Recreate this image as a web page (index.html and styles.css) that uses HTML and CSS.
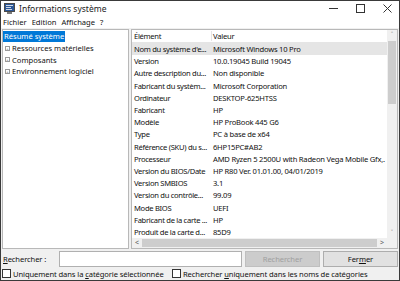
FILE: index.html
```html
<!DOCTYPE html>
<html lang="fr">
<head>
<meta charset="utf-8">
<title>Informations système</title>
<link rel="stylesheet" href="styles.css">
</head>
<body>
<div class="window">
  <div class="titlebar">
    <svg class="appicon" width="11" height="11" viewBox="0 0 11 11">
      <rect x="0.5" y="0.5" width="10" height="8" fill="#2b5797" stroke="#4a4a4a"/>
      <rect x="2" y="2" width="7" height="1" fill="#cfd8e6"/>
      <rect x="2" y="4" width="5" height="1" fill="#cfd8e6"/>
      <rect x="2" y="6" width="6" height="1" fill="#cfd8e6"/>
      <rect x="3" y="9" width="5" height="2" fill="#7a7a7a"/>
    </svg>
    <span class="title">Informations système</span>
    <div class="controls">
      <svg width="9" height="9" viewBox="0 0 9 9"><path d="M0 4.5H9" stroke="#333" stroke-width="1"/></svg>
      <svg width="9" height="9" viewBox="0 0 9 9"><rect x="0.5" y="0.5" width="8" height="8" fill="none" stroke="#333"/></svg>
      <svg width="9" height="9" viewBox="0 0 9 9"><path d="M0.5 0.5L8.5 8.5M8.5 0.5L0.5 8.5" stroke="#333" stroke-width="1"/></svg>
    </div>
  </div>
  <div class="menubar">
    <span>Fichier</span><span>Edition</span><span>Affichage</span><span>?</span>
  </div>
  <div class="main">
    <div class="tree">
      <div class="node"><span class="sel">Résumé système</span></div>
      <div class="node"><span class="exp">+</span><span>Ressources matérielles</span></div>
      <div class="node"><span class="exp">+</span><span>Composants</span></div>
      <div class="node"><span class="exp">+</span><span>Environnement logiciel</span></div>
    </div>
    <div class="list">
      <div class="table">
        <div class="row head"><div class="c1">Élément</div><div class="c2">Valeur</div></div>
        <div class="row hl"><div class="c1">Nom du système d'e...</div><div class="c2">Microsoft Windows 10 Pro</div></div>
        <div class="row"><div class="c1">Version</div><div class="c2">10.0.19045 Build 19045</div></div>
        <div class="row"><div class="c1">Autre description du...</div><div class="c2">Non disponible</div></div>
        <div class="row"><div class="c1">Fabricant du systèm...</div><div class="c2">Microsoft Corporation</div></div>
        <div class="row"><div class="c1">Ordinateur</div><div class="c2">DESKTOP-625HTSS</div></div>
        <div class="row"><div class="c1">Fabricant</div><div class="c2">HP</div></div>
        <div class="row"><div class="c1">Modèle</div><div class="c2">HP ProBook 445 G6</div></div>
        <div class="row"><div class="c1">Type</div><div class="c2">PC à base de x64</div></div>
        <div class="row"><div class="c1">Référence (SKU) du s...</div><div class="c2">6HP15PC#AB2</div></div>
        <div class="row"><div class="c1">Processeur</div><div class="c2">AMD Ryzen 5 2500U with Radeon Vega Mobile Gfx,.</div></div>
        <div class="row"><div class="c1">Version du BIOS/Date</div><div class="c2">HP R80 Ver. 01.01.00, 04/01/2019</div></div>
        <div class="row"><div class="c1">Version SMBIOS</div><div class="c2">3.1</div></div>
        <div class="row"><div class="c1">Version du contrôle...</div><div class="c2">99.09</div></div>
        <div class="row"><div class="c1">Mode BIOS</div><div class="c2">UEFI</div></div>
        <div class="row"><div class="c1">Fabricant de la carte ...</div><div class="c2">HP</div></div>
        <div class="row"><div class="c1">Produit de la carte d...</div><div class="c2">85D9</div></div>
      </div>
      <div class="vscroll">
        <span class="arrow">&#x2c4;</span>
        <div class="vtrack"><div class="vthumb"></div></div>
        <span class="arrow">&#x2c5;</span>
      </div>
      <div class="hscroll">
        <span class="arrow">&lt;</span>
        <div class="hthumb"></div>
        <span class="arrow">&gt;</span>
      </div>
      <div class="corner"></div>
    </div>
  </div>
  <div class="search">
    <label class="slabel"><u>R</u>echercher :</label>
    <div class="input"></div>
    <div class="btn disabled">Rechercher</div>
    <div class="btn"><span>Fer<u>m</u>er</span></div>
  </div>
  <div class="checks">
    <label class="chk"><span class="box"></span><span>Uniquement dans la <u>c</u>atégorie sélectionnée</span></label>
    <label class="chk second"><span class="box"></span><span>Rechercher <u>u</u>niquement dans les noms de catégories</span></label>
  </div>
</div>
</body>
</html>
```

FILE: styles.css
```css
* { box-sizing: border-box; }
html, body { margin: 0; padding: 0; }
body {
  width: 400px;
  height: 281px;
  overflow: hidden;
  font-family: "Noto Sans", "Liberation Sans", sans-serif;
  font-size: 7.6px;
  letter-spacing: -0.1px;
  color: #111;
  background: #fff;
}
.window {
  width: 400px;
  height: 281px;
  border: 1px solid #3a3a3a;
  background: #f0f0f0;
  display: flex;
  flex-direction: column;
}
.titlebar {
  height: 15px;
  background: #fff;
  display: flex;
  align-items: center;
  padding-left: 3px;
}
.appicon { flex: none; }
.title {
  margin-left: 4px;
  font-size: 8.5px;
  letter-spacing: 0;
  color: #222;
}
.controls {
  margin-left: auto;
  display: flex;
  gap: 18px;
  padding-right: 7px;
}
.controls svg { width: 9px; height: 9px; }
.menubar {
  height: 12px;
  background: #fff;
  display: flex;
  align-items: center;
  gap: 5px;
  padding-left: 2px;
  letter-spacing: 0;
}
.main {
  height: 220px;
  margin-top: 1px;
  display: flex;
  gap: 2px;
  padding: 0 1px;
}
.tree {
  width: 127px;
  background: #fff;
  border: 1px solid #b8b8b8;
  padding-top: 1px;
  letter-spacing: 0;
}
.node {
  height: 11.5px;
  display: flex;
  align-items: center;
  white-space: nowrap;
}
.sel {
  background: #0078d7;
  color: #fff;
  padding: 0 1px;
  line-height: 11px;
}
.exp {
  width: 5px;
  height: 5px;
  border: 1px solid #9a9a9a;
  font-size: 4px;
  line-height: 3px;
  text-align: center;
  color: #666;
  margin: 0 2px 0 2px;
}
.list {
  flex: 1;
  background: #fff;
  border: 1px solid #b8b8b8;
  display: grid;
  grid-template-columns: 1fr 10px;
  grid-template-rows: 1fr 10px;
  overflow: hidden;
}
.table { overflow: hidden; }
.row {
  height: 12.2px;
  display: flex;
  align-items: center;
  white-space: nowrap;
}
.row.head {
  height: 13px;
  border-bottom: 1px solid #e5e5e5;
}
.row.head .c1 { border-right: 1px solid #e5e5e5; }
.row.hl { background: #e5e5e5; }
.c1 {
  width: 80px;
  flex: none;
  padding-left: 2px;
  overflow: hidden;
  letter-spacing: -0.3px;
}
.c2 {
  padding-left: 1px;
  flex: 1;
  letter-spacing: -0.22px;
}
.vscroll {
  background: #f0f0f0;
  display: flex;
  flex-direction: column;
  align-items: center;
}
.arrow {
  font-size: 7px;
  color: #606060;
  line-height: 10px;
  height: 10px;
}
.vtrack { flex: 1; width: 100%; padding: 0 1px; }
.vthumb {
  margin-top: 1px;
  height: 63px;
  background: #cdcdcd;
}
.hscroll {
  background: #f0f0f0;
  display: flex;
  align-items: center;
  padding: 0 3px;
  gap: 3px;
}
.hthumb {
  flex: 1;
  height: 8px;
  background: #cdcdcd;
}
.corner { background: #f0f0f0; }
.search {
  height: 17px;
  margin-top: 1px;
  display: flex;
  align-items: center;
  padding: 0 1px 0 2px;
}
.slabel { width: 56px; }
.input {
  width: 183px;
  height: 16px;
  background: #fff;
  border: 1px solid #b0b0b0;
}
.btn {
  width: 75px;
  height: 16px;
  margin-left: 3px;
  border: 1px solid #adadad;
  background: #e1e1e1;
  display: flex;
  align-items: center;
  justify-content: center;
}
.btn.disabled {
  background: #cccccc;
  border-color: #bfbfbf;
  color: #a0a0a0;
}
.checks {
  height: 13px;
  display: flex;
  align-items: center;
  padding-left: 1px;
}
.chk {
  display: flex;
  align-items: center;
  white-space: nowrap;
}
.chk:first-child { width: 170px; }
.box {
  flex: none;
  width: 9px;
  height: 9px;
  border: 1px solid #333;
  background: #fff;
  margin-right: 2px;
}
```
